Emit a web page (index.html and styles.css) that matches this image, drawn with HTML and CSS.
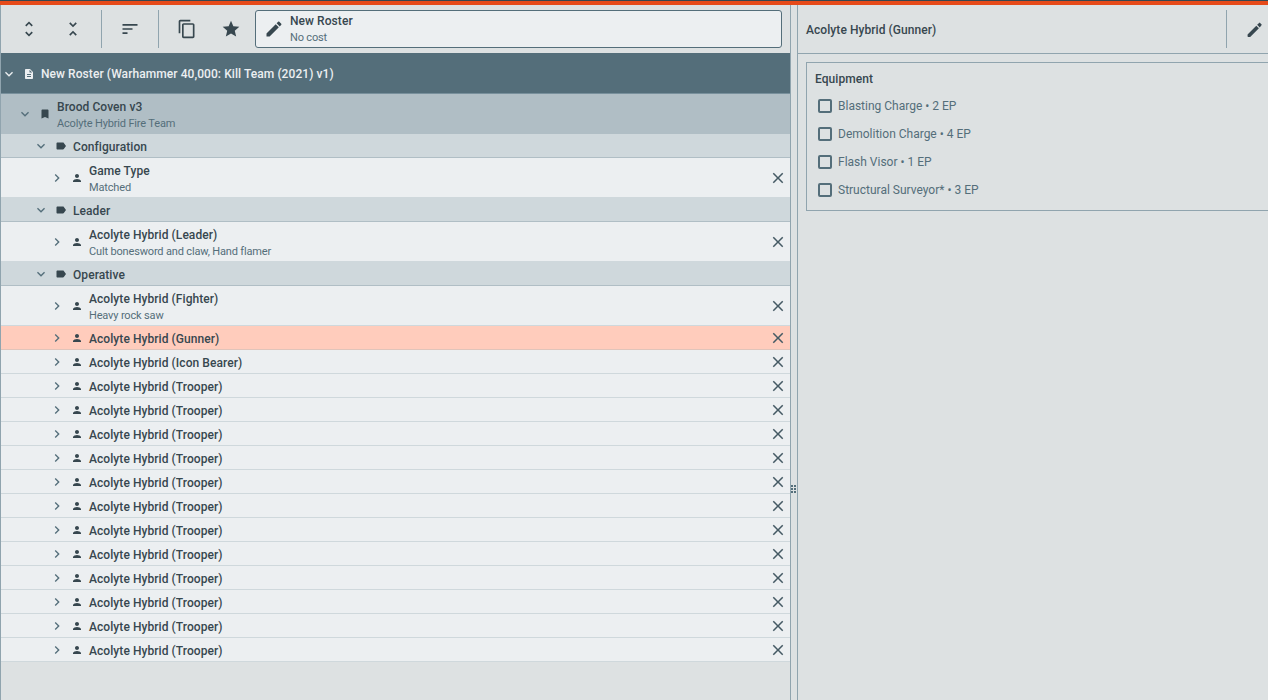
FILE: index.html
```html
<!DOCTYPE html>
<html lang="en">
<head>
<meta charset="utf-8">
<title>New Roster</title>
<link rel="stylesheet" href="styles.css">
</head>
<body>
<svg class="defs" aria-hidden="true">
  <symbol id="i-more" viewBox="0 0 24 24"><path d="M12 5.83L15.17 9l1.41-1.41L12 3 7.41 7.59 8.83 9 12 5.83zm0 12.34L8.83 15l-1.41 1.41L12 21l4.59-4.59L15.17 15 12 18.17z"/></symbol>
  <symbol id="i-less" viewBox="0 0 24 24"><path d="M7.41 18.59L8.83 20 12 16.83 15.17 20l1.41-1.41L12 14l-4.59 4.59zm9.18-13.18L15.17 4 12 7.17 8.83 4 7.41 5.41 12 10l4.59-4.59z"/></symbol>
  <symbol id="i-sort" viewBox="0 0 24 24"><path d="M3 18h6v-2H3v2zM3 6v2h18V6H3zm0 7h12v-2H3v2z"/></symbol>
  <symbol id="i-copy" viewBox="0 0 24 24"><path d="M16 1H4c-1.1 0-2 .9-2 2v14h2V3h12V1zm3 4H8c-1.1 0-2 .9-2 2v14c0 1.1.9 2 2 2h11c1.1 0 2-.9 2-2V7c0-1.1-.9-2-2-2zm0 16H8V7h11v14z"/></symbol>
  <symbol id="i-star" viewBox="0 0 24 24"><path d="M12 17.27L18.18 21l-1.64-7.03L22 9.24l-7.19-.61L12 2 9.19 8.63 2 9.24l5.46 4.73L5.82 21z"/></symbol>
  <symbol id="i-edit" viewBox="0 0 24 24"><path d="M3 17.25V21h3.75L17.81 9.94l-3.75-3.75L3 17.25zM20.71 7.04c.39-.39.39-1.02 0-1.41l-2.34-2.34c-.39-.39-1.02-.39-1.41 0l-1.83 1.83 3.75 3.75 1.83-1.83z"/></symbol>
  <symbol id="i-doc" viewBox="0 0 24 24"><path d="M14 2H6c-1.1 0-1.99.9-1.99 2L4 20c0 1.1.89 2 1.99 2H18c1.1 0 2-.9 2-2V8l-6-6zm2 16H8v-2h8v2zm0-4H8v-2h8v2zm-3-5V3.5L18.5 9H13z"/></symbol>
  <symbol id="i-bookmark" viewBox="0 0 24 24"><path d="M17 3H7c-1.1 0-1.99.9-1.99 2L5 21l7-3 7 3V5c0-1.1-.9-2-2-2z"/></symbol>
  <symbol id="i-label" viewBox="0 0 24 24"><path d="M17.63 5.84C17.27 5.33 16.67 5 16 5L5 5.01C3.9 5.01 3 5.9 3 7v10c0 1.1.9 1.99 2 1.99L16 19c.67 0 1.27-.33 1.63-.84L22 12l-4.37-6.16z"/></symbol>
  <symbol id="i-person" viewBox="0 0 24 24"><path d="M12 12c2.21 0 4-1.79 4-4s-1.79-4-4-4-4 1.79-4 4 1.79 4 4 4zm0 2c-2.67 0-8 1.34-8 4v2h16v-2c0-2.66-5.33-4-8-4z"/></symbol>
  <symbol id="i-close" viewBox="0 0 24 24"><path d="M19 6.41L17.59 5 12 10.59 6.41 5 5 6.41 10.59 12 5 17.59 6.41 19 12 13.41 17.59 19 19 17.59 13.41 12z"/></symbol>
  <symbol id="i-down" viewBox="0 0 24 24"><path d="M16.59 8.59L12 13.17 7.41 8.59 6 10l6 6 6-6z"/></symbol>
  <symbol id="i-right" viewBox="0 0 24 24"><path d="M10 6L8.59 7.41 13.17 12l-4.58 4.59L10 18l6-6z"/></symbol>
  <symbol id="i-pen" viewBox="0 0 16 16"><path d="M0.6 13.2 L9.9 3.9 L12.7 6.7 L3.4 16 L1.2 16 L0.6 15.4 Z M10.8 3 L12.6 1.2 L13.5 0.6 L15.8 2.9 L15.2 3.8 L13.6 5.8 Z"/></symbol>
</svg>
<div class="topbar"></div>
<main class="main">
  <section class="left">
    <div class="toolbar">
      <button class="tool"><svg class="ic20"><use href="#i-more"/></svg></button>
      <button class="tool"><svg class="ic20"><use href="#i-less"/></svg></button>
      <span class="sep"></span>
      <button class="tool"><svg class="ic20"><use href="#i-sort"/></svg></button>
      <span class="sep"></span>
      <button class="tool"><svg class="ic20"><use href="#i-copy"/></svg></button>
      <button class="tool"><svg class="ic20"><use href="#i-star"/></svg></button>
      <div class="roster">
        <svg class="ic20"><use href="#i-edit"/></svg>
        <div class="roster-text">
          <div class="title">New Roster</div>
          <div class="sub">No cost</div>
        </div>
      </div>
    </div>
    <div class="row root">
      <svg class="arrow"><use href="#i-down"/></svg>
      <svg class="kind"><use href="#i-doc"/></svg>
      <div class="title">New Roster (Warhammer 40,000: Kill Team (2021) v1)</div>
    </div>
    <div class="row force">
      <svg class="arrow"><use href="#i-down"/></svg>
      <svg class="kind"><use href="#i-bookmark"/></svg>
      <div class="text"><div class="title">Brood Coven v3</div><div class="sub">Acolyte Hybrid Fire Team</div></div>
    </div>
    <div class="row cat">
      <svg class="arrow"><use href="#i-down"/></svg>
      <svg class="kind"><use href="#i-label"/></svg>
      <div class="text title">Configuration</div>
    </div>
    <div class="row unit tall">
      <svg class="arrow"><use href="#i-right"/></svg>
      <svg class="kind"><use href="#i-person"/></svg>
      <div class="text grow"><div class="title">Game Type</div><div class="sub">Matched</div></div>
      <svg class="close"><use href="#i-close"/></svg>
    </div>
    <div class="row cat">
      <svg class="arrow"><use href="#i-down"/></svg>
      <svg class="kind"><use href="#i-label"/></svg>
      <div class="text title">Leader</div>
    </div>
    <div class="row unit tall">
      <svg class="arrow"><use href="#i-right"/></svg>
      <svg class="kind"><use href="#i-person"/></svg>
      <div class="text grow"><div class="title">Acolyte Hybrid (Leader)</div><div class="sub">Cult bonesword and claw, Hand flamer</div></div>
      <svg class="close"><use href="#i-close"/></svg>
    </div>
    <div class="row cat">
      <svg class="arrow"><use href="#i-down"/></svg>
      <svg class="kind"><use href="#i-label"/></svg>
      <div class="text title">Operative</div>
    </div>
    <div class="row unit tall">
      <svg class="arrow"><use href="#i-right"/></svg>
      <svg class="kind"><use href="#i-person"/></svg>
      <div class="text grow"><div class="title">Acolyte Hybrid (Fighter)</div><div class="sub">Heavy rock saw</div></div>
      <svg class="close"><use href="#i-close"/></svg>
    </div>
    <div class="row unit selected">
      <svg class="arrow"><use href="#i-right"/></svg>
      <svg class="kind"><use href="#i-person"/></svg>
      <div class="text grow title">Acolyte Hybrid (Gunner)</div>
      <svg class="close"><use href="#i-close"/></svg>
    </div>
    <div class="row unit">
      <svg class="arrow"><use href="#i-right"/></svg>
      <svg class="kind"><use href="#i-person"/></svg>
      <div class="text grow title">Acolyte Hybrid (Icon Bearer)</div>
      <svg class="close"><use href="#i-close"/></svg>
    </div>
    <div class="row unit"><svg class="arrow"><use href="#i-right"/></svg><svg class="kind"><use href="#i-person"/></svg><div class="text grow title">Acolyte Hybrid (Trooper)</div><svg class="close"><use href="#i-close"/></svg></div>
    <div class="row unit"><svg class="arrow"><use href="#i-right"/></svg><svg class="kind"><use href="#i-person"/></svg><div class="text grow title">Acolyte Hybrid (Trooper)</div><svg class="close"><use href="#i-close"/></svg></div>
    <div class="row unit"><svg class="arrow"><use href="#i-right"/></svg><svg class="kind"><use href="#i-person"/></svg><div class="text grow title">Acolyte Hybrid (Trooper)</div><svg class="close"><use href="#i-close"/></svg></div>
    <div class="row unit"><svg class="arrow"><use href="#i-right"/></svg><svg class="kind"><use href="#i-person"/></svg><div class="text grow title">Acolyte Hybrid (Trooper)</div><svg class="close"><use href="#i-close"/></svg></div>
    <div class="row unit"><svg class="arrow"><use href="#i-right"/></svg><svg class="kind"><use href="#i-person"/></svg><div class="text grow title">Acolyte Hybrid (Trooper)</div><svg class="close"><use href="#i-close"/></svg></div>
    <div class="row unit"><svg class="arrow"><use href="#i-right"/></svg><svg class="kind"><use href="#i-person"/></svg><div class="text grow title">Acolyte Hybrid (Trooper)</div><svg class="close"><use href="#i-close"/></svg></div>
    <div class="row unit"><svg class="arrow"><use href="#i-right"/></svg><svg class="kind"><use href="#i-person"/></svg><div class="text grow title">Acolyte Hybrid (Trooper)</div><svg class="close"><use href="#i-close"/></svg></div>
    <div class="row unit"><svg class="arrow"><use href="#i-right"/></svg><svg class="kind"><use href="#i-person"/></svg><div class="text grow title">Acolyte Hybrid (Trooper)</div><svg class="close"><use href="#i-close"/></svg></div>
    <div class="row unit"><svg class="arrow"><use href="#i-right"/></svg><svg class="kind"><use href="#i-person"/></svg><div class="text grow title">Acolyte Hybrid (Trooper)</div><svg class="close"><use href="#i-close"/></svg></div>
    <div class="row unit"><svg class="arrow"><use href="#i-right"/></svg><svg class="kind"><use href="#i-person"/></svg><div class="text grow title">Acolyte Hybrid (Trooper)</div><svg class="close"><use href="#i-close"/></svg></div>
    <div class="row unit"><svg class="arrow"><use href="#i-right"/></svg><svg class="kind"><use href="#i-person"/></svg><div class="text grow title">Acolyte Hybrid (Trooper)</div><svg class="close"><use href="#i-close"/></svg></div>
    <div class="row unit"><svg class="arrow"><use href="#i-right"/></svg><svg class="kind"><use href="#i-person"/></svg><div class="text grow title">Acolyte Hybrid (Trooper)</div><svg class="close"><use href="#i-close"/></svg></div>
  </section>
  <div class="splitter"><span class="handle"></span></div>
  <section class="right">
    <header class="detail-head">
      <div class="title grow">Acolyte Hybrid (Gunner)</div>
      <span class="sep"></span>
      <svg class="pen"><use href="#i-pen"/></svg>
    </header>
    <fieldset class="group">
      <div class="title group-title">Equipment</div>
      <label class="opt"><span class="box"></span>Blasting Charge • 2 EP</label>
      <label class="opt"><span class="box"></span>Demolition Charge • 4 EP</label>
      <label class="opt"><span class="box"></span>Flash Visor • 1 EP</label>
      <label class="opt"><span class="box"></span>Structural Surveyor* • 3 EP</label>
    </fieldset>
  </section>
</main>
</body>
</html>
```
FILE: styles.css
```css
* { box-sizing: border-box; }
html, body { height: 100%; }
body {
  margin: 0;
  height: 700px;
  overflow: hidden;
  display: flex;
  flex-direction: column;
  background: #dde1e2;
  color: #37474f;
  font-family: Roboto, "Liberation Sans", sans-serif;
  font-size: 12px;
  line-height: 16px;
}
svg { fill: currentColor; display: block; flex: none; }
.defs { display: none; }

.topbar {
  height: 5px;
  flex: none;
  background: #e64a19;
  border-top: 1px solid #37474f;
}
.main { flex: 1; display: flex; min-height: 0; }

.left {
  width: 790px;
  flex: none;
  border-left: 1px solid #90a4ae;
  display: flex;
  flex-direction: column;
}
.toolbar {
  height: 48px;
  flex: none;
  display: flex;
  align-items: center;
  padding-left: 6px;
}
.tool {
  width: 44px;
  height: 38px;
  border: 0;
  padding: 0;
  background: none;
  color: #37474f;
  display: flex;
  align-items: center;
  justify-content: center;
}
.sep {
  width: 1px;
  height: 38px;
  margin: 0 6px;
  flex: none;
  background: #90a4ae;
}
.ic20 { width: 20px; height: 20px; }
.roster {
  margin-left: 2px;
  width: 527px;
  height: 38px;
  display: flex;
  align-items: center;
  gap: 6px;
  padding-left: 8px;
  background: #eceff1;
  border: 1px solid #546e7a;
  border-radius: 3px;
}
.title { font-weight: 500; letter-spacing: .07px; }
.sub { color: #546e7a; font-size: 11px; letter-spacing: -.16px; line-height: 17px; }
.grow { flex: 1; min-width: 0; }
.text { padding-top: 3px; }
.text.title { padding-top: 2px; }

.row { display: flex; align-items: center; flex: none; }
.arrow { width: 16px; height: 16px; color: #546e7a; }
.kind { width: 12px; height: 12px; margin: 0 6px; }

.root {
  height: 41px;
  padding-top: 1px;
  background: #546e7a;
  color: #eceff1;
  border-bottom: 1px solid #78909c;
}
.root .arrow { color: #eceff1; }
.force {
  height: 40px;
  background: #b0bec5;
  padding-left: 16px;
}
.cat {
  height: 24px;
  background: #cfd8dc;
  border-bottom: 1px solid #b0bec5;
  padding-left: 32px;
}
.unit {
  height: 24px;
  background: #eceff1;
  border-bottom: 1px solid #cfd8dc;
  padding-left: 48px;
  padding-right: 3px;
}
.unit.tall { height: 40px; }
.unit.selected { background: #ffccbc; border-bottom-color: #e0c4ba; }
.close { width: 18px; height: 18px; color: #455a64; }

.splitter {
  width: 8px;
  flex: none;
  border-left: 1px solid #90a4ae;
  border-right: 1px solid #90a4ae;
  padding-top: 480px;
  display: flex;
  justify-content: center;
}
.handle {
  width: 6px;
  height: 9px;
  background-image: radial-gradient(circle at 1px 1px, #546e7a 1px, transparent 1px);
  background-size: 3px 3px;
}

.right { flex: 1; min-width: 0; display: flex; flex-direction: column; }
.detail-head {
  height: 49px;
  flex: none;
  display: flex;
  align-items: center;
  padding: 0 6px 0 8px;
  border-bottom: 1px solid #90a4ae;
}
.detail-head .title { padding-top: 2px; }
.detail-head .sep { margin: 0 20px 0 0; }
.pen { width: 15px; height: 15px; }
.group {
  margin: 8px -2px 0 8px;
  padding: 8px 8px 0 8px;
  height: 149px;
  border: 1px solid #90a4ae;
  min-width: 0;
}
.group-title { margin-bottom: 5px; }
.opt {
  height: 28px;
  display: flex;
  align-items: center;
  color: #546e7a;
  padding-left: 3px;
}
.box {
  width: 14px;
  height: 14px;
  margin-right: 6px;
  border: 2px solid #546e7a;
  border-radius: 2px;
}
```
